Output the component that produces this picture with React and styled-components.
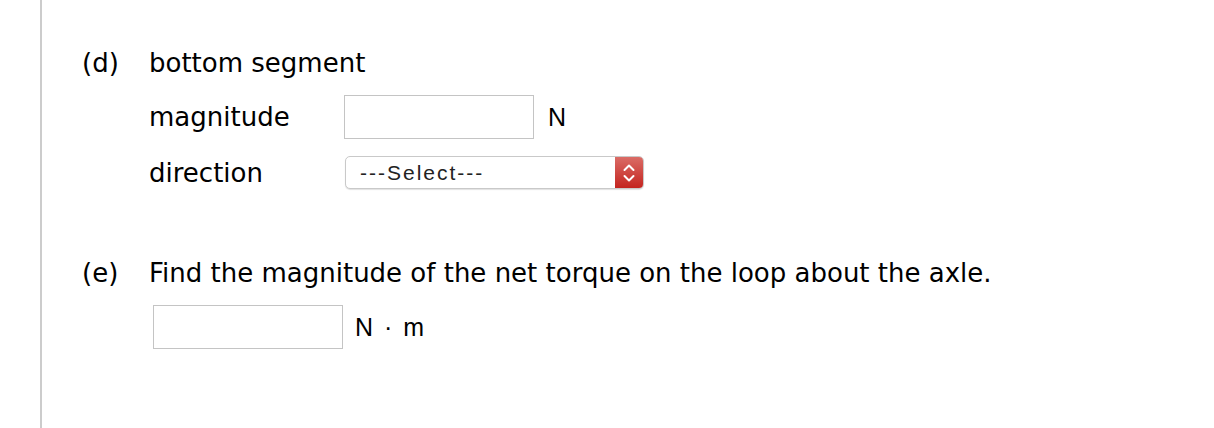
import React from "react";
import styled, { createGlobalStyle } from "styled-components";

const GlobalStyle = createGlobalStyle`
  html, body {
    margin: 0;
    padding: 0;
    background: #fff;
  }
`;

const App = () => {
  return (
    <>
      <GlobalStyle />
      <Page>
        <Sheet>
          <Part>
            <PartLabel>(d)</PartLabel>
            <PartBody>
              <Prompt>bottom segment</Prompt>
              <FieldRow>
                <FieldName>magnitude</FieldName>
                <AnswerInput type="text" />
                <Unit>N</Unit>
              </FieldRow>
              <FieldRow>
                <FieldName>direction</FieldName>
                <SelectBox>
                  <Select defaultValue="">
                    <option value="">---Select---</option>
                  </Select>
                  <SelectArrow>
                    <svg width="12" height="20" viewBox="0 0 12 20">
                      <path
                        d="M1.5 7 L6 2.5 L10.5 7 M1.5 13 L6 17.5 L10.5 13"
                        fill="none"
                        stroke="#fff"
                        strokeWidth="2"
                        strokeLinecap="round"
                        strokeLinejoin="round"
                      />
                    </svg>
                  </SelectArrow>
                </SelectBox>
              </FieldRow>
            </PartBody>
          </Part>
          <Part gap="69px">
            <PartLabel>(e)</PartLabel>
            <PartBody>
              <Prompt>Find the magnitude of the net torque on the loop about the axle.</Prompt>
              <FieldRow>
                <AnswerInput type="text" indent="4px" />
                <Unit gap="12px">N · m</Unit>
              </FieldRow>
            </PartBody>
          </Part>
        </Sheet>
      </Page>
    </>
  );
};

export default App;

const Page = styled.div`
  width: 100%;
  height: 100vh;
  padding-left: 40px;
  box-sizing: border-box;
`;

const Sheet = styled.div`
  height: 100%;
  border-left: 2px solid #cccccc;
  padding: 48px 0 0 40px;
  box-sizing: border-box;
  font-family: "DejaVu Sans", Verdana, sans-serif;
  font-size: 26px;
  color: #000;
`;

const Part = styled.div`
  display: flex;
  margin-top: ${({ gap }) => gap || "0"};
`;

const PartLabel = styled.div`
  width: 67px;
  flex-shrink: 0;
  line-height: 30px;
`;

const PartBody = styled.div`
  display: flex;
  flex-direction: column;
  gap: 17px;
`;

const Prompt = styled.div`
  line-height: 30px;
`;

const FieldRow = styled.div`
  display: flex;
  align-items: center;
`;

const FieldName = styled.div`
  width: 195px;
  line-height: 30px;
`;

const AnswerInput = styled.input`
  all: unset;
  box-sizing: border-box;
  width: 190px;
  height: 44px;
  margin-left: ${({ indent }) => indent || "0"};
  border: 1px solid #c4c4c4;
  background: #fff;
`;

const Unit = styled.span`
  margin-left: ${({ gap }) => gap || "14px"};
  font-family: "Liberation Sans", Arial, sans-serif;
  font-size: 25px;
  letter-spacing: 2px;
  white-space: pre;
`;

const SelectBox = styled.div`
  display: flex;
  width: 299px;
  height: 33px;
  margin-left: 1px;
  box-sizing: border-box;
  border: 1px solid #c9c9c9;
  border-radius: 5px;
  box-shadow: 0 1px 1px rgba(0, 0, 0, 0.12);
  overflow: hidden;
  background: #fff;
`;

const Select = styled.select`
  all: unset;
  flex: 1;
  height: 100%;
  line-height: 31px;
  padding-left: 14px;
  font-family: "Liberation Sans", Arial, sans-serif;
  font-size: 21px;
  letter-spacing: 2px;
  color: #222;
`;

const SelectArrow = styled.div`
  width: 28px;
  display: flex;
  align-items: center;
  justify-content: center;
  background: linear-gradient(#da6c66, #c4241f);
`;
